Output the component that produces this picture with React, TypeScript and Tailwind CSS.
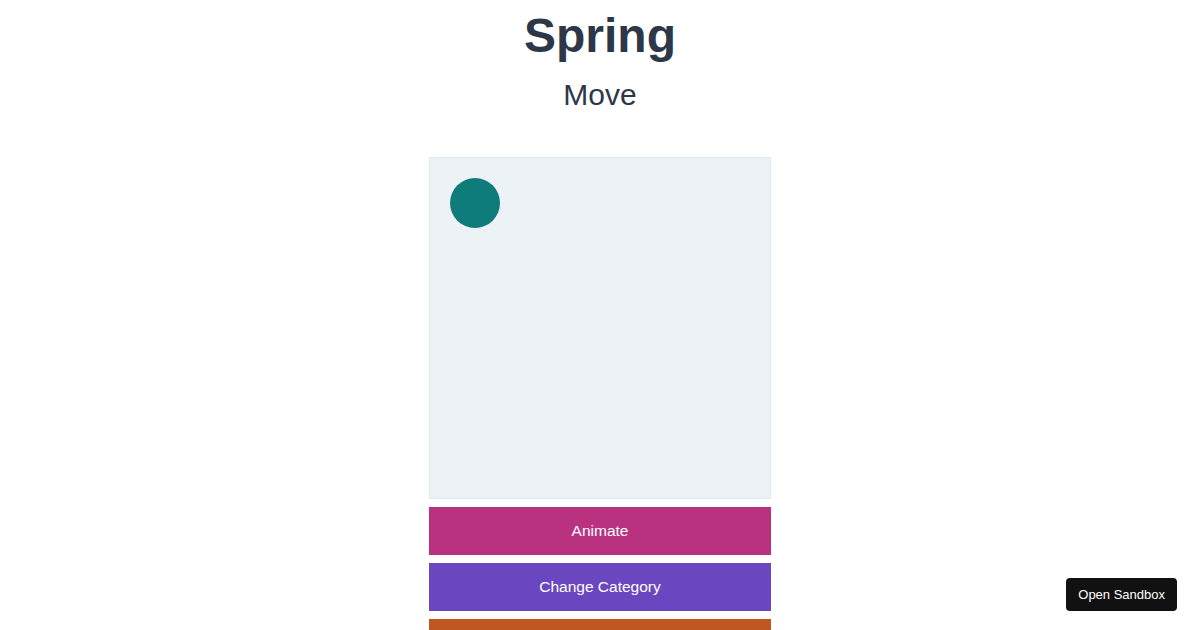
import React from 'react';

const App = () => {
  const buttons = [
    { label: 'Animate', className: 'bg-[#b83280]' },
    { label: 'Change Category', className: 'bg-[#6b46c1]' },
    { label: 'Reset', className: 'bg-[#c05621]' },
  ];

  return (
    <div className="min-h-screen bg-white font-['Liberation_Sans',Arial,sans-serif] text-[#2d3748]">
      <div className="mx-auto w-[342px] pt-[8px]">
        <h1 className="text-center text-[48px] font-bold leading-[56px]">Spring</h1>
        <h2 className="mt-[12px] text-center text-[30px] leading-[38px]">Move</h2>

        <div className="mt-[43px] h-[342px] border border-[#e2e8f0] bg-[#edf2f7] p-[20px]">
          <div className="h-[50px] w-[50px] rounded-full bg-[#0e7c7b]" />
        </div>

        <div className="mt-[8px] flex flex-col gap-[8px]">
          {buttons.map((b) => (
            <button
              key={b.label}
              className={`h-[48px] w-full text-[15.5px] text-white ${b.className}`}
            >
              {b.label}
            </button>
          ))}
        </div>
      </div>

      <button className="fixed right-[23px] bottom-[19px] rounded-[4px] bg-[#111111] px-[12px] py-[8px] text-[13px] leading-[17px] text-white">
        Open Sandbox
      </button>
    </div>
  );
};

export default App;
